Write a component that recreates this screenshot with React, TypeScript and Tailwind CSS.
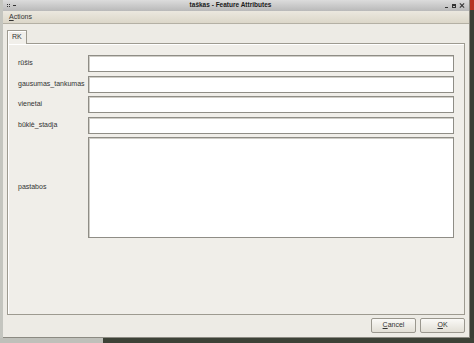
const fields = [
  { label: "rūšis", h: "h-[17px]" },
  { label: "gausumas_tankumas", h: "h-[17px]" },
  { label: "vienetai", h: "h-[17px]" },
  { label: "būklė_stadja", h: "h-[17px]" },
];

const App = () => {
  return (
    <div className="w-[474px] h-[343px] flex flex-col bg-[#3d4237] overflow-hidden font-['Liberation_Sans',Arial,sans-serif] text-[7px] text-[#333]">
      <div className="flex h-[338px]">
        {/* desktop strip left */}
        <div className="w-[3px] bg-[#c4c5bf]" />

        {/* window */}
        <div className="w-[467px] flex flex-col bg-[#edebe5] border-r border-b border-[#8c8a82]">
          {/* title bar */}
          <div className="h-[11px] flex items-center bg-gradient-to-b from-[#dcdcdc] to-[#b9b9b9] px-[4px] relative">
            <div className="flex items-center gap-[3px]">
              <div className="grid grid-cols-2 gap-[1px]">
                <div className="w-[1px] h-[1px] bg-[#333]" />
                <div className="w-[1px] h-[1px] bg-[#333]" />
                <div className="w-[1px] h-[1px] bg-[#333]" />
                <div className="w-[1px] h-[1px] bg-[#333]" />
              </div>
              <div className="w-[3px] h-[1px] bg-[#333]" />
            </div>
            <div className="flex-1 text-center font-bold text-[6.5px] text-[#1a1a1a] leading-none">
              taškas - Feature Attributes
            </div>
            <div className="flex items-center gap-[4px] pr-[1px]">
              <div className="w-[3px] h-[1px] bg-[#333] mt-[3px]" />
              <div className="w-[4px] h-[4px] border border-[#333] border-t-2" />
              <div className="relative w-[4px] h-[4px]">
                <div className="absolute left-[-1px] top-[1.5px] w-[6px] h-[1px] bg-[#333] rotate-45" />
                <div className="absolute left-[-1px] top-[1.5px] w-[6px] h-[1px] bg-[#333] -rotate-45" />
              </div>
            </div>
          </div>

          {/* menu bar */}
          <div className="h-[13px] flex items-center bg-gradient-to-b from-[#ebe8df] to-[#dcd7c9] border-b border-[#b4b0a4] px-[6px]">
            <span>
              <span className="underline">A</span>ctions
            </span>
          </div>

          {/* tabs */}
          <div className="flex-1 flex flex-col px-[4px] pt-[5px]">
            <div className="flex">
              <div className="h-[14px] px-[4px] flex items-center border border-b-0 border-[#9d9a90] bg-[#f1efea] rounded-t-[1px] relative top-[1px] z-10 shadow-[inset_1px_1px_0_#fff]">
                RK
              </div>
            </div>
            <div className="h-[272px] border border-[#9d9a90] bg-[#f0eee9] shadow-[inset_1px_1px_0_#fff] flex flex-col px-[10px] pt-[11px] gap-[3.5px]">
              {fields.map((f) => (
                <div key={f.label} className="flex items-center">
                  <div className="w-[70px]">{f.label}</div>
                  <div className={`flex-1 ${f.h} bg-white border border-[#8f8d86] shadow-[inset_1px_1px_0_#d0cec8]`} />
                </div>
              ))}
              <div className="flex items-center">
                <div className="w-[70px]">pastabos</div>
                <div className="flex-1 h-[101px] bg-white border border-[#8f8d86] shadow-[inset_1px_1px_0_#d0cec8]" />
              </div>
            </div>
            {/* buttons */}
            <div className="flex justify-end gap-[4px] mt-[3px]">
              <button className="w-[45px] h-[15px] border border-[#9a978e] rounded-[2px] bg-gradient-to-b from-[#faf9f6] to-[#e2dfd6] text-[7px]">
                <span className="underline">C</span>ancel
              </button>
              <button className="w-[45px] h-[15px] border border-[#9a978e] rounded-[2px] bg-gradient-to-b from-[#faf9f6] to-[#e2dfd6] text-[7px]">
                <span className="underline">O</span>K
              </button>
            </div>
          </div>
        </div>

        {/* desktop strip right */}
        <div className="flex-1 flex flex-col bg-[#3a3f35]">
          <div className="h-[10px] bg-[#b53324]" />
        </div>
      </div>
      <div className="flex-1 flex">
        <div className="w-[103px] bg-[#bfc0ba]" />
        <div className="flex-1 bg-[#3d4237]" />
      </div>
    </div>
  );
};

export default App;
